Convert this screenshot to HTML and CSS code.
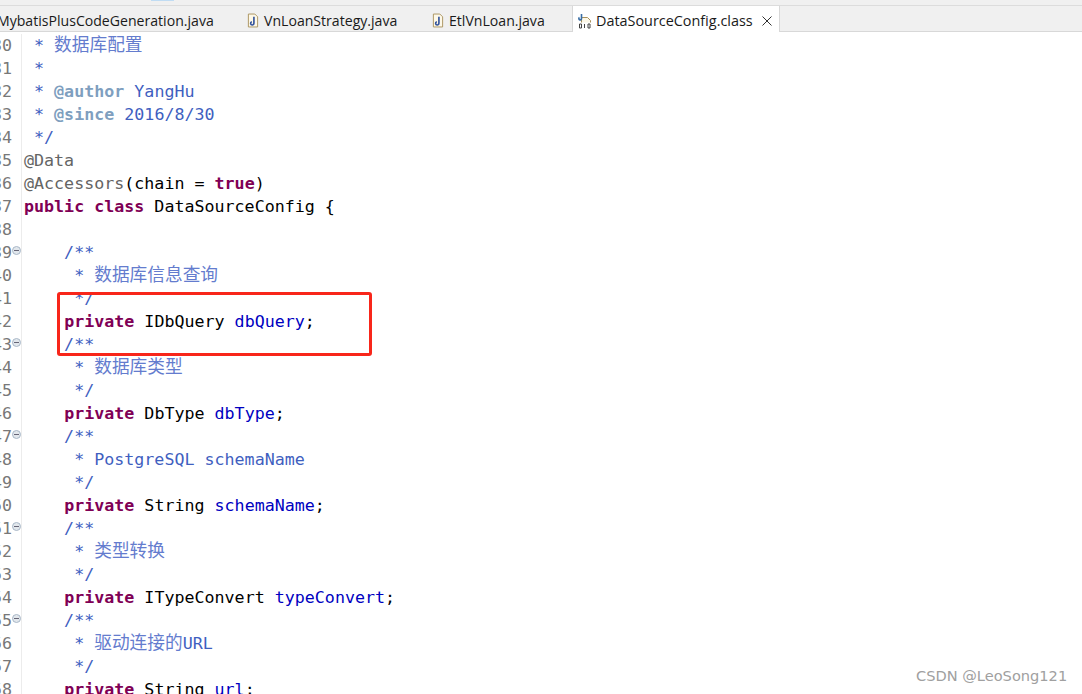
FILE: index.html
```html
<!DOCTYPE html>
<html lang="zh">
<head>
<meta charset="utf-8">
<title>DataSourceConfig.class</title>
<link rel="stylesheet" href="styles.css">
</head>
<body>
<div class="topstrip"><span class="marker"></span></div>
<div class="tabs">
  <div class="tab first"><span>MybatisPlusCodeGeneration.java</span></div>
  <div class="tab second">
    <svg class="ficon" viewBox="0 0 13 15"><path d="M1.500 .5h7l3 3v11h-10z" fill="#fdf8e8" stroke="#a8915c"/><path d="M7.500 3.500v7a1.800 1.800 0 1 1-2.200-1.700" fill="none" stroke="#34549c" stroke-width="1.800"/></svg>
    <span>VnLoanStrategy.java</span>
  </div>
  <div class="tab third">
    <svg class="ficon" viewBox="0 0 13 15"><path d="M1.500 .5h7l3 3v11h-10z" fill="#fdf8e8" stroke="#a8915c"/><path d="M7.500 3.500v7a1.800 1.800 0 1 1-2.200-1.700" fill="none" stroke="#34549c" stroke-width="1.800"/></svg>
    <span>EtlVnLoan.java</span>
  </div>
  <div class="tab active">
    <svg class="cicon" viewBox="0 0 14 15"><path d="M3.500 3.500h6l3 3v4h-9z" fill="#fdf8e8" stroke="#a8915c"/><path d="M3.500 0v4.500a1.300 1.300 0 1 1-2-1" fill="none" stroke="#3a6ea5" stroke-width="1.600"/><rect x="0" y="8.500" width="14" height="6" fill="#fff"/><path d="M1.500 10h2v4h-2zM6.500 10v4M10 10h2v4h-2z" fill="none" stroke="#444" stroke-width="1"/></svg>
    <span class="active-label">DataSourceConfig.class</span>
    <svg class="close" viewBox="0 0 10 10"><path d="M.5 .5l9 9M9.500 .5l-9 9" stroke="#333" fill="none"/></svg>
  </div>
  <div class="rest"></div>
</div>
<div class="editor">
  <div class="row"><div class="gutter"><span>30</span></div><code class="c"> * <i>数据库配置</i></code></div>
  <div class="row"><div class="gutter"><span>31</span></div><code class="c"> *</code></div>
  <div class="row"><div class="gutter"><span>32</span></div><code class="c"> * <b class="t">@author</b> YangHu</code></div>
  <div class="row"><div class="gutter"><span>33</span></div><code class="c"> * <b class="t">@since</b> 2016/8/30</code></div>
  <div class="row"><div class="gutter"><span>34</span></div><code class="c"> */</code></div>
  <div class="row"><div class="gutter"><span>35</span></div><code class="a">@Data</code></div>
  <div class="row"><div class="gutter"><span>36</span></div><code><span class="a">@Accessors</span>(chain = <b class="k">true</b>)</code></div>
  <div class="row"><div class="gutter"><span>37</span></div><code><b class="k">public class</b> DataSourceConfig {</code></div>
  <div class="row"><div class="gutter"><span>38</span></div><code></code></div>
  <div class="row"><div class="gutter fold"><span>39</span></div><code class="c">    /**</code></div>
  <div class="row"><div class="gutter"><span>40</span></div><code class="c">     * <i>数据库信息查询</i></code></div>
  <div class="row"><div class="gutter"><span>41</span></div><code class="c">     */</code></div>
  <div class="row"><div class="gutter"><span>42</span></div><code>    <b class="k">private</b> IDbQuery <span class="f">dbQuery</span>;</code></div>
  <div class="row"><div class="gutter fold"><span>43</span></div><code class="c">    /**</code></div>
  <div class="row"><div class="gutter"><span>44</span></div><code class="c">     * <i>数据库类型</i></code></div>
  <div class="row"><div class="gutter"><span>45</span></div><code class="c">     */</code></div>
  <div class="row"><div class="gutter"><span>46</span></div><code>    <b class="k">private</b> DbType <span class="f">dbType</span>;</code></div>
  <div class="row"><div class="gutter fold"><span>47</span></div><code class="c">    /**</code></div>
  <div class="row"><div class="gutter"><span>48</span></div><code class="c">     * PostgreSQL schemaName</code></div>
  <div class="row"><div class="gutter"><span>49</span></div><code class="c">     */</code></div>
  <div class="row"><div class="gutter"><span>50</span></div><code>    <b class="k">private</b> String <span class="f">schemaName</span>;</code></div>
  <div class="row"><div class="gutter fold"><span>51</span></div><code class="c">    /**</code></div>
  <div class="row"><div class="gutter"><span>52</span></div><code class="c">     * <i>类型转换</i></code></div>
  <div class="row"><div class="gutter"><span>53</span></div><code class="c">     */</code></div>
  <div class="row"><div class="gutter"><span>54</span></div><code>    <b class="k">private</b> ITypeConvert <span class="f">typeConvert</span>;</code></div>
  <div class="row"><div class="gutter fold"><span>55</span></div><code class="c">    /**</code></div>
  <div class="row"><div class="gutter"><span>56</span></div><code class="c">     * <i>驱动连接的</i>URL</code></div>
  <div class="row"><div class="gutter"><span>57</span></div><code class="c">     */</code></div>
  <div class="row"><div class="gutter"><span>58</span></div><code>    <b class="k">private</b> String <span class="f">url</span>;</code></div>
</div>
<div class="highlight"></div>
<div class="watermark">CSDN @LeoSong121</div>
</body>
</html>
```
FILE: styles.css
```css
html, body {
  margin: 0;
  padding: 0;
  height: 694px;
  overflow: hidden;
  background: #fff;
}
body { position: relative; }
.topstrip {
  height: 5px;
  background: #f0f0f0;
  border-bottom: 1px solid #dcdcdc;
}
.marker {
  display: block;
  width: 23px;
  height: 1px;
  margin-left: 151px;
  background: #c0dcf3;
}
.tabs {
  display: flex;
  align-items: stretch;
  height: 26px;
  background: #f0f0f0;
  font: 14.1px/18px "Open Sans", "Noto Sans", sans-serif;
  color: #1a1a1a;
  white-space: nowrap;
}
.tab {
  display: flex;
  align-items: center;
  flex-shrink: 0;
  box-sizing: border-box;
  padding-top: 4px;
  border-bottom: 1px solid #d8d8d8;
}
.tab.first { margin-left: -3px; width: 250px; }
.tab.second { width: 185px; }
.tab.third { width: 140px; }
.tab.active {
  width: 208px;
  padding-left: 5px;
  background: #fff;
  border-left: 1px solid #d8d8d8;
  border-right: 1px solid #d8d8d8;
  border-bottom: 0;
}
.active-label { font-size: 14.4px; }
.rest { flex: 1; border-bottom: 1px solid #d8d8d8; }
.ficon { width: 12px; height: 15px; margin-right: 5px; flex-shrink: 0; }
.cicon { width: 14px; height: 15px; margin-right: 4px; flex-shrink: 0; }
.close { width: 10px; height: 10px; margin-left: 9px; flex-shrink: 0; }
.editor {
  padding-top: 2px;
  font: 16.67px/23px "DejaVu Sans Mono", "Liberation Mono", "Noto Sans CJK SC", monospace;
  color: #000;
}
.row { display: flex; height: 23px; }
.gutter {
  width: 12px;
  flex-shrink: 0;
  padding-right: 9px;
  margin-right: 2px;
  border-right: 1px solid #ececec;
  display: flex;
  justify-content: flex-end;
  overflow: hidden;
  color: #787878;
  position: relative;
}
.gutter span { flex-shrink: 0; }
.gutter.fold::after {
  content: "";
  position: absolute;
  right: 0;
  top: 5px;
  width: 7px;
  height: 7px;
  border: 1px solid #a9b8c8;
  border-radius: 50%;
  background: linear-gradient(#667, #667) center / 5px 1px no-repeat, #e2e7ec;
}
code { font: inherit; white-space: pre; }
i {
  font-style: normal;
  font-size: 17.7px;
  line-height: 0;
  font-family: "Noto Sans CJK SC", sans-serif;
  color: #647cce;
}
b { font-weight: bold; }
.c { color: #3f5fbf; }
.t { color: #7f9fbf; }
.a { color: #646464; }
.k { color: #7f0055; }
.f { color: #0000c0; }
.highlight {
  position: absolute;
  left: 57px;
  top: 292px;
  width: 309px;
  height: 58px;
  border: 3px solid #f8261a;
  border-radius: 3px;
}
.watermark {
  position: absolute;
  left: 916px;
  top: 667px;
  font: 14.6px/18px "DejaVu Sans", sans-serif;
  color: #a0a0a0;
  white-space: nowrap;
}
```
